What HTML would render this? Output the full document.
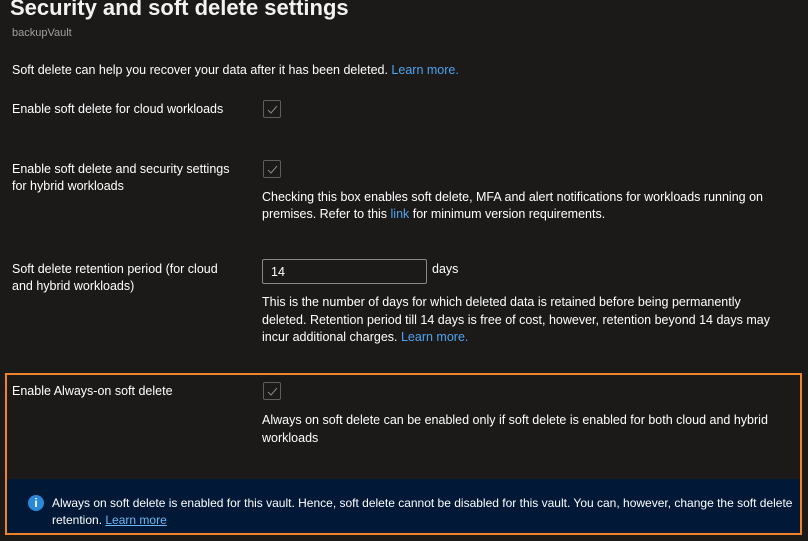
<!DOCTYPE html>
<html><head><meta charset="utf-8"><style>
body{margin:0;width:808px;height:541px;background:#1b1a19;font-family:"Liberation Sans",sans-serif;color:#fff;position:relative;overflow:hidden;font-size:12.5px}
.a{position:absolute;white-space:nowrap}
.l{color:#4fa3ef}
.cb{position:absolute;width:18px;height:18px;border:1px solid #605e5c;border-radius:2px;box-sizing:border-box;left:263px}
.cb svg{position:absolute;left:3px;top:3px}
</style></head><body>
<div class="a" style="left:10px;top:-5px;font-size:22px;font-weight:bold;color:#f3f2f1">Security and soft delete settings</div>
<div class="a" style="left:12px;top:27px;font-size:11px;color:#a19f9d">backupVault</div>
<div class="a" style="left:12px;top:63px">Soft delete can help you recover your data after it has been deleted. <span class="l">Learn more.</span></div>
<div class="a" style="left:12px;top:102px">Enable soft delete for cloud workloads</div>
<div class="cb" style="top:100px"><svg width="11" height="11"><path d="M1 6l3 3 6-7" stroke="#8a8886" fill="none"/></svg></div>
<div class="a" style="left:12px;top:161px;line-height:17px">Enable soft delete and security settings<br>for hybrid workloads</div>
<div class="cb" style="top:160px"><svg width="11" height="11"><path d="M1 6l3 3 6-7" stroke="#8a8886" fill="none"/></svg></div>
<div class="a" style="left:262px;top:189px;line-height:17px">Checking this box enables soft delete, MFA and alert notifications for workloads running on<br>premises. Refer to this <span class="l">link</span> for minimum version requirements.</div>
<div class="a" style="left:12px;top:261px;line-height:17px">Soft delete retention period (for cloud<br>and hybrid workloads)</div>
<div style="position:absolute;left:262px;top:259px;width:165px;height:25px;border:1px solid #8a8886;border-radius:2px;box-sizing:border-box;background:#1b1a19"></div>
<div class="a" style="left:271px;top:265px;color:#fff">14</div>
<div class="a" style="left:432px;top:262px">days</div>
<div class="a" style="left:262px;top:294px;line-height:17.5px">This is the number of days for which deleted data is retained before being permanently<br>deleted. Retention period till 14 days is free of cost, however, retention beyond 14 days may<br>incur additional charges. <span class="l">Learn more.</span></div>
<div style="position:absolute;left:5px;top:373px;width:797px;height:162px;border:2px solid #f08228;box-sizing:border-box"></div>
<div class="a" style="left:12px;top:384px">Enable Always-on soft delete</div>
<div class="cb" style="top:382px"><svg width="11" height="11"><path d="M1 6l3 3 6-7" stroke="#8a8886" fill="none"/></svg></div>
<div class="a" style="left:262px;top:412px;line-height:17.5px">Always on soft delete can be enabled only if soft delete is enabled for both cloud and hybrid<br>workloads</div>
<div style="position:absolute;left:7px;top:479px;width:793px;height:54px;background:#011836"></div>
<div style="position:absolute;left:28px;top:495px;width:16px;height:16px;border-radius:50%;background:#2b88d8;color:#fff;font-size:12px;font-weight:bold;text-align:center;line-height:16px">i</div>
<div class="a" style="left:52px;top:495px;line-height:17px;font-size:12px">Always on soft delete is enabled for this vault. Hence, soft delete cannot be disabled for this vault. You can, however, change the soft delete<br>retention. <span style="color:#6cb8f6;text-decoration:underline">Learn more</span></div>
</body></html>
